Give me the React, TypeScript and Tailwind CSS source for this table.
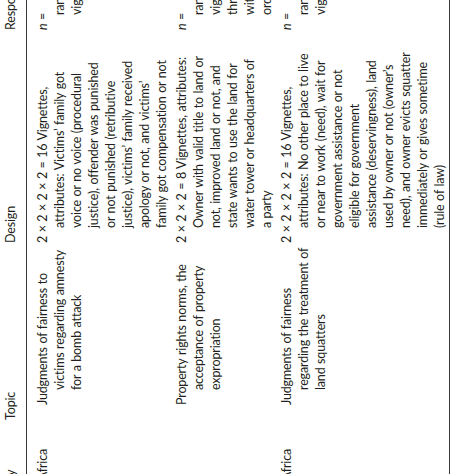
const rows = [
  {
    country: 'South Africa',
    topic: ['Judgments of fairness to', 'victims regarding amnesty', 'for a bomb attack'],
    design: [
      '2 × 2 × 2 × 2 = 16 Vignettes,',
      'attributes: Victims’ family got',
      'voice or no voice (procedural',
      'justice), offender was punished',
      'or not punished (retributive',
      'justice), victims’ family received',
      'apology or not, and victims’',
      'family got compensation or not',
    ],
    response: ['n =    1,068, Cape Town', 'random sample,', 'vignettes between subjects'],
  },
  {
    country: '',
    topic: ['Property rights norms, the', 'acceptance of property', 'expropriation'],
    design: [
      '2 × 2 × 2 = 8 Vignettes, attributes:',
      'Owner with valid title to land or',
      'not, improved land or not, and',
      'state wants to use the land for',
      'water tower or headquarters of',
      'a party',
    ],
    response: [
      'n =    1,068, Cape Town',
      'random sample,',
      'vignettes between subjects,',
      'three versions, each',
      'with two vignettes',
      'order randomized',
    ],
  },
  {
    country: 'South Africa',
    topic: ['Judgments of fairness', 'regarding the treatment of', 'land squatters'],
    design: [
      '2 × 2 × 2 × 2 = 16 Vignettes,',
      'attributes: No other place to live',
      'or near to work (need), wait for',
      'government assistance or not',
      'eligible for government',
      'assistance (deservingness), land',
      'used by owner or not (owner’s',
      'need), and owner evicts squatter',
      'immediately or gives sometime',
      '(rule of law)',
    ],
    response: ['n =    1,068, Cape Town', 'random sample,', 'vignettes within subjects'],
  },
];

function Lines({ lines }: { lines: string[] }) {
  return (
    <div>
      {lines.map((line, i) => (
        <div key={i} className={i === 0 ? 'whitespace-pre' : 'whitespace-pre pl-[15px]'}>
          {line.startsWith('n = ') ? (
            <>
              <i>n</i>
              {line.slice(1)}
            </>
          ) : (
            line
          )}
        </div>
      ))}
    </div>
  );
}

export default function App() {
  return (
    <div className="relative h-[474px] w-[474px] overflow-hidden bg-white">
      {/* the printed table is turned on its side */}
      <div
        className="absolute left-0 top-[520px] w-[700px] origin-top-left -rotate-90 pl-[10px] text-[12.5px] leading-[17px] tracking-[-0.15px] text-[#231f20]"
        style={{ fontFamily: 'Lato, "Open Sans", sans-serif', wordSpacing: '0.5px' }}
      >
        <div className="grid grid-cols-[105px_162px_213px_210px] border-b-[1.5px] border-[#3a3a3a] pt-[2px] pb-[7px]">
          <div className="-ml-[3px]">Country</div>
          <div className="-ml-[15px]">Topic</div>
          <div>Design</div>
          <div>Respondents</div>
        </div>
        <div className="border-b-[1.5px] border-[#3a3a3a] pt-[5px]">
          {rows.map((row, i) => (
            <div key={i} className="grid grid-cols-[105px_162px_213px_210px] py-[1.5px]">
              <div className="-ml-[5px] whitespace-nowrap">{row.country}</div>
              <Lines lines={row.topic} />
              <Lines lines={row.design} />
              <Lines lines={row.response} />
            </div>
          ))}
        </div>
      </div>
    </div>
  );
}
